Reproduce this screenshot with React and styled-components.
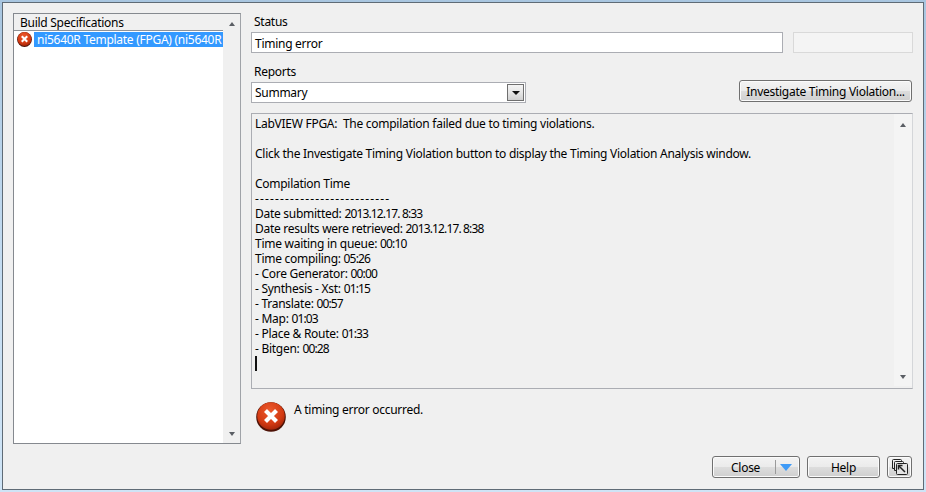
import styled, { createGlobalStyle } from "styled-components";

const GlobalStyle = createGlobalStyle`
  html, body {
    margin: 0;
    padding: 0;
    background: #c4dcf2;
  }
  * {
    box-sizing: border-box;
  }
`;

const uiFont = `"Noto Sans", "Open Sans", sans-serif`;

// window frame
const Frame = styled.div`
  width: 926px;
  height: 492px;
  padding: 2px;
  background: linear-gradient(180deg, #a9c6e0 0%, #c6def3 60%, #cfe4f6 100%);
  overflow: hidden;
`;

const Dialog = styled.div`
  height: 100%;
  border: 1px solid #5f6b76;
  background: #f0f0f0;
  padding: 10px 10px 0 10px;
  font: 12px/15px ${uiFont};
  color: #000;
  letter-spacing: -0.27px;
`;

const Content = styled.div`
  display: grid;
  grid-template-columns: 228px 662px;
  gap: 10px;
  height: 431px;
`;

// build specifications list
const SpecPanel = styled.div`
  position: relative;
  height: 431px;
  border: 1px solid #85898f;
  border-right-color: #a0a3a8;
  background: #fff;
  padding-right: 17px;
`;

const SpecHeader = styled.div`
  height: 17px;
  padding: 1px 0 0 6px;
  background: #f0f0f0;
  border-bottom: 1px solid #8e9297;
  white-space: nowrap;
`;

const SpecRow = styled.div`
  display: flex;
  align-items: center;
  height: 17px;
  padding-left: 3px;
`;

const SpecName = styled.div`
  flex: 1;
  min-width: 0;
  height: 15px;
  margin-left: 2px;
  padding-left: 3px;
  color: #fff;
  background: #3399ff;
  white-space: nowrap;
  overflow: hidden;
`;

const Scrollbar = styled.div`
  position: absolute;
  top: 0;
  right: 0;
  bottom: ${(props) => props.$bottom}px;
  width: ${(props) => props.$width}px;
  background: ${(props) => props.$track};
  display: flex;
  flex-direction: column;
  justify-content: space-between;
  align-items: center;
  padding: ${(props) => props.$pad};
`;

const Arrow = styled.span`
  width: 0;
  height: 0;
  border-left: 3.5px solid transparent;
  border-right: 3.5px solid transparent;
  ${(props) =>
    props.$down
      ? "border-top: 4px solid #5a5e64;"
      : "border-bottom: 4px solid #5a5e64;"}
`;

// right side
const Main = styled.div`
  display: flex;
  flex-direction: column;
  padding-top: 1px;
`;

const FieldLabel = styled.div`
  height: 15px;
  margin-bottom: 3px;
  padding-left: 3px;
`;

const StatusRow = styled.div`
  display: flex;
  gap: 10px;
`;

const TextBox = styled.div`
  width: ${(props) => props.$width}px;
  height: 21px;
  padding: 3px 3px;
  border: 1px solid #abadb3;
  background: #fff;
`;

const DisabledBox = styled(TextBox)`
  border-color: #d9d9d9;
  background: #f4f4f4;
`;

const ReportsRow = styled.div`
  display: flex;
  justify-content: space-between;
  align-items: flex-end;
  margin-top: 11px;
  padding-right: 1px;
`;

const SelectBox = styled.div`
  display: flex;
  align-items: center;
  justify-content: space-between;
  width: 275px;
  height: 21px;
  padding: 0 1px 0 3px;
  border: 1px solid #abadb3;
  background: #fff;
`;

const SelectButton = styled.div`
  display: flex;
  align-items: center;
  justify-content: center;
  width: 17px;
  height: 17px;
  border: 1px solid #6f6f6f;
  background: linear-gradient(180deg, #f4f4f4 0%, #e6e6e6 50%, #d0d0d0 100%);
`;

const SelectArrow = styled.span`
  width: 0;
  height: 0;
  border-left: 4px solid transparent;
  border-right: 4px solid transparent;
  border-top: 4px solid #111;
`;

const PushButton = styled.button`
  display: flex;
  align-items: center;
  justify-content: center;
  width: ${(props) => props.$width}px;
  height: 22px;
  padding: 0;
  border: 1px solid #707070;
  border-radius: 3px;
  box-shadow: inset 0 0 0 1px #fbfbfb;
  background: linear-gradient(180deg, #f3f3f3 0%, #ebebeb 48%, #dddddd 50%, #cfcfcf 100%);
  font: inherit;
  letter-spacing: inherit;
  color: #000;
`;

const InvestigateButton = styled(PushButton)`
  margin-bottom: 1px;
`;

const CloseButton = styled(PushButton)`
  justify-content: flex-start;
  padding-left: 18px;
`;

const ReportBox = styled.div`
  position: relative;
  height: 276px;
  margin-top: 10px;
  padding: 2px 3px;
  border: 1px solid #abadb3;
  border-right-color: #d4d6d9;
  background: #f0f0f0;
`;

const ReportLine = styled.div`
  height: 15px;
  white-space: pre;
`;

const DashLine = styled(ReportLine)`
  letter-spacing: 1.15px;
`;

// the digits in the reference are narrower than in the label text
const ReportValue = styled.span`
  letter-spacing: -0.85px;
`;

const Caret = styled.div`
  width: 2px;
  height: 15px;
  background: #111;
`;

const ResultRow = styled.div`
  display: flex;
  gap: 8px;
  margin-top: 13px;
  padding-left: 5px;
`;

const ResultText = styled.div`
  margin-top: -1px;
  padding-top: 1px;
`;

// footer
const Footer = styled.div`
  display: flex;
  justify-content: flex-end;
  gap: 7px;
  padding: 12px 1px 0 0;
`;

const CloseDivider = styled.span`
  width: 1px;
  height: 14px;
  margin: 0 4px 0 15px;
  background: #9a9a9a;
`;

const CloseArrow = styled.span`
  width: 0;
  height: 0;
  border-left: 6.5px solid transparent;
  border-right: 6.5px solid transparent;
  border-top: 7px solid #3f9bf7;
`;

const ErrorBadge = styled.svg`
  flex: none;
`;

const ErrorIcon = ({ size }) => (
  <ErrorBadge width={size} height={size} viewBox="0 0 30 30">
    <defs>
      <radialGradient id={`err${size}`} cx="45%" cy="30%" r="75%">
        <stop offset="0%" stopColor="#ec5a2e" />
        <stop offset="65%" stopColor="#d33a12" />
        <stop offset="100%" stopColor="#9c2208" />
      </radialGradient>
    </defs>
    <circle cx="15" cy="15" r="14.8" fill="#4d1206" />
    <circle cx="15" cy="14" r="13.8" fill={`url(#err${size})`} />
    <path d="M9.5 8.5 L20.5 19.5 M20.5 8.5 L9.5 19.5" stroke="#fff" strokeWidth="4.2" />
  </ErrorBadge>
);

const WindowsIcon = () => (
  <svg width="18" height="18" viewBox="0 0 18 18" fill="none" stroke="#222" strokeWidth="1">
    <path d="M3.5 10.5 H1.5 V2.5 Q1.5 1.5 2.5 1.5 H9.5 Q10.5 1.5 10.5 2.5 V3.5" />
    <path d="M5.5 12.5 H3.5 V4.5 Q3.5 3.5 4.5 3.5 H11.5 Q12.5 3.5 12.5 4.5 V5.5" />
    <rect x="5.5" y="5.5" width="11" height="11" rx="1" fill="#e4e4e4" />
    <path d="M8 8 L14 14" strokeWidth="1.5" />
    <path d="M7.5 11.5 V7.5 H11.5" strokeWidth="1.5" />
  </svg>
);

const reportTop = [
  "LabVIEW FPGA:  The compilation failed due to timing violations.",
  "",
  "Click the Investigate Timing Violation button to display the Timing Violation Analysis window.",
  "",
  "Compilation Time",
];

const reportTimes = [
  ["Date submitted: ", "2013.12.17. 8:33"],
  ["Date results were retrieved: ", "2013.12.17. 8:38"],
  ["Time waiting in queue: ", "00:10"],
  ["Time compiling: ", "05:26"],
  ["- Core Generator: ", "00:00"],
  ["- Synthesis - Xst: ", "01:15"],
  ["- Translate: ", "00:57"],
  ["- Map: ", "01:03"],
  ["- Place & Route: ", "01:33"],
  ["- Bitgen: ", "00:28"],
];

export default function App() {
  return (
    <Frame>
      <GlobalStyle />
      <Dialog>
        <Content>
          <SpecPanel>
            <SpecHeader>Build Specifications</SpecHeader>
            <SpecRow>
              <ErrorIcon size={15} />
              <SpecName>ni5640R Template (FPGA) (ni5640R Template (FPGA))</SpecName>
            </SpecRow>
            <Scrollbar $bottom={0} $width={17} $track="#f0f0f0" $pad="8px 0 7px">
              <Arrow />
              <Arrow $down />
            </Scrollbar>
          </SpecPanel>

          <Main>
            <FieldLabel>Status</FieldLabel>
            <StatusRow>
              <TextBox $width={532}>Timing error</TextBox>
              <DisabledBox $width={120} />
            </StatusRow>

            <ReportsRow>
              <div>
                <FieldLabel>Reports</FieldLabel>
                <SelectBox>
                  Summary
                  <SelectButton>
                    <SelectArrow />
                  </SelectButton>
                </SelectBox>
              </div>
              <InvestigateButton $width={173}>Investigate Timing Violation...</InvestigateButton>
            </ReportsRow>

            <ReportBox>
              {reportTop.map((line, i) => (
                <ReportLine key={i}>{line}</ReportLine>
              ))}
              <DashLine>---------------------------</DashLine>
              {reportTimes.map(([label, value]) => (
                <ReportLine key={label}>
                  {label}
                  <ReportValue>{value}</ReportValue>
                </ReportLine>
              ))}
              <Caret />
              <Scrollbar $bottom={2} $width={18} $track="#f4f4f4" $pad="9px 0 7px">
                <Arrow />
                <Arrow $down />
              </Scrollbar>
            </ReportBox>

            <ResultRow>
              <ErrorIcon size={30} />
              <ResultText>A timing error occurred.</ResultText>
            </ResultRow>
          </Main>
        </Content>

        <Footer>
          <CloseButton $width={88}>
            Close
            <CloseDivider />
            <CloseArrow />
          </CloseButton>
          <PushButton $width={73}>Help</PushButton>
          <PushButton $width={25}>
            <WindowsIcon />
          </PushButton>
        </Footer>
      </Dialog>
    </Frame>
  );
}
